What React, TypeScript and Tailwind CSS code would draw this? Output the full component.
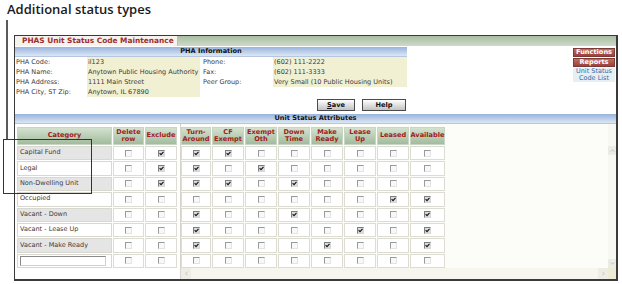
import React from "react";

const rows: [string, number[]][] = [
  ["Capital Fund", [0, 1, 1, 1, 0, 0, 0, 0, 0, 0]],
  ["Legal", [0, 1, 1, 0, 1, 0, 0, 0, 0, 0]],
  ["Non-Dwelling Unit", [0, 1, 1, 1, 0, 1, 0, 0, 0, 0]],
  ["Occupied", [0, 0, 0, 0, 0, 0, 0, 0, 1, 1]],
  ["Vacant - Down", [0, 0, 1, 0, 0, 1, 0, 0, 0, 1]],
  ["Vacant - Lease Up", [0, 0, 1, 0, 0, 0, 0, 1, 0, 1]],
  ["Vacant - Make Ready", [0, 0, 1, 0, 0, 0, 1, 0, 0, 1]],
  ["", [0, 0, 0, 0, 0, 0, 0, 0, 0, 0]],
];

const leftHeads = [["Category"], ["Delete", "row"], ["Exclude"]];
const rightHeads = [
  ["Turn-", "Around"],
  ["CF", "Exempt"],
  ["Exempt", "Oth"],
  ["Down", "Time"],
  ["Make", "Ready"],
  ["Lease", "Up"],
  ["Leased"],
  ["Available"],
];

const info = [
  ["PHA Code:", "il123", "Phone:", "(602) 111-2222"],
  ["PHA Name:", "Anytown Public Housing Authority", "Fax:", "(602) 111-3333"],
  ["PHA Address:", "1111 Main Street", "Peer Group:", "Very Small (10 Public Housing Units)"],
  ["PHA City, ST Zip:", "Anytown, IL 67890", "", ""],
];

function Box({ on }: { on: number }) {
  return (
    <span
      className={
        on
          ? "relative block w-[7px] h-[7px] border border-t-[#7e7e7e] border-l-[#7e7e7e] border-b-[#d8d8d8] border-r-[#d8d8d8] bg-[#dcdcdc]"
          : "relative block w-[7px] h-[7px] border border-t-[#9a9a9a] border-l-[#9a9a9a] border-b-[#e4e4e4] border-r-[#e4e4e4] bg-[#f8f8f8]"
      }
    >
      {on ? (
        <svg viewBox="0 0 5 5" className="absolute left-0 top-0 w-[5px] h-[5px]">
          <path d="M0.6 2.2 L2 3.6 L4.5 0.9" stroke="#111" strokeWidth="1.1" fill="none" />
        </svg>
      ) : null}
    </span>
  );
}

function Head({ lines }: { lines: string[] }) {
  return (
    <div className="flex flex-col items-center justify-center bg-gradient-to-b from-[#d3e2cf] to-[#a2bb9e] border border-[#c8d4c4] text-[#a01c1c] font-bold text-[6.6px] leading-[7.5px] text-center">
      {lines.map((l) => (
        <span key={l}>{l}</span>
      ))}
    </div>
  );
}

function Cell({ on }: { on: number }) {
  return (
    <div className="flex items-center justify-center bg-white border border-[#dcdcd2]">
      <Box on={on} />
    </div>
  );
}

export default function App() {
  return (
    <div className="relative w-[622px] h-[284px] overflow-hidden bg-white font-['DejaVu_Sans',sans-serif] text-[#333]">
      <h1 className="h-[35px] pl-[7px] pt-[1px] font-['Open_Sans',sans-serif] font-semibold text-[13px] leading-[16px] text-[#1a1a1a]">
        Additional status types
      </h1>

      <div className="ml-[14px] w-[604px] h-[246px] border border-r-2 border-b-2 border-[#3a3a3a] flex flex-col">
        {/* title strip */}
        <div className="flex h-[10px]">
          <div className="w-[163px] pl-[7px] bg-[#f6f2ee] border-r border-[#b8c4b0] text-[#9c2e2e] font-bold text-[7.4px] leading-[10px] whitespace-nowrap">
            PHAS Unit Status Code Maintenance
          </div>
          <div className="flex-1 bg-gradient-to-b from-[#a9bea3] to-[#cddbc8]" />
        </div>

        <div className="flex mt-px">
          <div className="w-[392px] flex flex-col">
            <div className="h-[10px] bg-gradient-to-b from-[#98b3dc] to-[#dde7f4] border-b border-[#b4c6e0] text-center font-bold text-[6.6px] leading-[9px] text-[#111]">
              PHA Information
            </div>
            {info.map((r) => (
              <div key={r[0]} className="grid grid-cols-[72px_113px_73px_134px] h-[10px] text-[6.5px] leading-[10px] whitespace-nowrap text-[#3a3a3a]">
                <div className="pl-px">{r[0]}</div>
                <div className="pl-px bg-[#f1f0d2] overflow-hidden">{r[1]}</div>
                <div className="pl-[3px]">{r[2]}</div>
                <div className={r[3] ? "pl-px bg-[#f1f0d2] overflow-hidden" : ""}>{r[3]}</div>
              </div>
            ))}
            <div className="flex justify-end gap-[7px] pr-px pt-[2px] h-[17px]">
              <button className="w-[38px] h-[12px] border border-[#4a4a4a] bg-gradient-to-b from-white to-[#c2c2c2] font-bold text-[6.6px] leading-[10px] text-[#111]">
                <span className="underline">S</span>ave
              </button>
              <button className="w-[44px] h-[12px] border border-[#4a4a4a] bg-gradient-to-b from-white to-[#c2c2c2] font-bold text-[6.6px] leading-[10px] text-[#111]">
                Help
              </button>
            </div>
          </div>
          <div className="flex-1" />
          <div className="w-[42px] mr-px flex flex-col gap-px pt-px">
            <div className="h-[9px] bg-gradient-to-b from-[#c26c64] to-[#9c4038] border border-[#7c3a34] text-white font-bold text-[6.6px] leading-[7px] text-center">
              Functions
            </div>
            <div className="h-[9px] bg-gradient-to-b from-[#c26c64] to-[#9c4038] border border-[#7c3a34] text-white font-bold text-[6.6px] leading-[7px] text-center">
              Reports
            </div>
            <div className="h-[14px] bg-[#e7eff3] text-[#3966a6] text-[6.5px] leading-[7px] text-center">
              Unit Status
              <br />
              Code List
            </div>
          </div>
        </div>

        <div className="h-[10px] bg-gradient-to-b from-[#98b3dc] to-[#dde7f4] border-b border-[#b4c6e0] text-center font-bold text-[6.6px] leading-[9px] text-[#111]">
          Unit Status Attributes
        </div>

        {/* grid area */}
        <div className="flex flex-1 min-h-0">
          <div className="pl-[2px] pt-[3px]">
            <div className="grid grid-cols-[95px_31px_32px] grid-rows-[18px_repeat(8,14.4px)] gap-px">
              {leftHeads.map((h) => (
                <Head key={h[0]} lines={h} />
              ))}
              {rows.map(([name, v], i) => (
                <React.Fragment key={i}>
                  <div
                    className={
                      i % 2 === 0
                        ? "flex items-center pl-[2px] bg-[#e5e5e5] border border-[#d8d8d0] text-[6.5px] text-[#3a3a3a]"
                        : "flex items-center pl-[2px] bg-white border border-[#d8d8d0] text-[6.5px] text-[#3a3a3a]"
                    }
                  >
                    {name || (
                      <span className="block w-[86px] h-[10px] mt-[1px] bg-white border border-t-[#8a8a8a] border-l-[#8a8a8a] border-b-[#d0d0d0] border-r-[#d0d0d0]" />
                    )}
                  </div>
                  <Cell on={v[0]} />
                  <Cell on={v[1]} />
                </React.Fragment>
              ))}
            </div>
          </div>

          <div className="ml-[3px] flex-1 flex flex-col border-l border-[#d4d4cc] bg-[#fcfcf9]">
            <div className="flex flex-1 min-h-0">
              <div className="flex-1 pt-[3px]">
                <div className="grid grid-cols-[30px_32px_32px_32px_32px_32px_32px_35px] grid-rows-[18px_repeat(8,14.4px)] gap-px w-max">
                  {rightHeads.map((h) => (
                    <Head key={h[0]} lines={h} />
                  ))}
                  {rows.map(([, v], i) => (
                    <React.Fragment key={i}>
                      {v.slice(2).map((c, j) => (
                        <Cell key={j} on={c} />
                      ))}
                    </React.Fragment>
                  ))}
                </div>
              </div>
              <div className="w-[8px] flex flex-col pt-[22px] bg-[#f8f8f2]">
                <div className="h-[9px] flex items-center justify-center bg-[#ecece6]">
                  <svg viewBox="0 0 6 4" className="w-[5px] h-[3px]">
                    <path d="M0.5 3.5 L3 1 L5.5 3.5" stroke="#b4b4ac" strokeWidth="1" fill="none" />
                  </svg>
                </div>
                <div className="flex-1" />
                <div className="h-[9px] flex items-center justify-center bg-[#ecece6]">
                  <svg viewBox="0 0 6 4" className="w-[5px] h-[3px]">
                    <path d="M0.5 0.5 L3 3 L5.5 0.5" stroke="#b4b4ac" strokeWidth="1" fill="none" />
                  </svg>
                </div>
              </div>
            </div>
            <div className="h-[11px] flex bg-[#f6f6ee]">
              <div className="w-[10px] flex items-center justify-center bg-[#ededE6]">
                <svg viewBox="0 0 4 6" className="w-[3px] h-[5px]">
                  <path d="M3.5 0.5 L1 3 L3.5 5.5" stroke="#b4b4ac" strokeWidth="1" fill="none" />
                </svg>
              </div>
              <div className="flex-1" />
              <div className="w-[10px] flex items-center justify-center bg-[#ededE6]">
                <svg viewBox="0 0 4 6" className="w-[3px] h-[5px]">
                  <path d="M0.5 0.5 L3 3 L0.5 5.5" stroke="#b4b4ac" strokeWidth="1" fill="none" />
                </svg>
              </div>
              <div className="w-[8px] bg-[#ebebd6]" />
            </div>
          </div>
        </div>
      </div>

      {/* callout */}
      <div className="absolute left-[6px] top-[20px] w-[2px] h-[119px] bg-[#5a5a5a]" />
      <div className="absolute left-[3px] top-[139px] w-[89px] h-[55px] border border-[#333]" />
    </div>
  );
}
